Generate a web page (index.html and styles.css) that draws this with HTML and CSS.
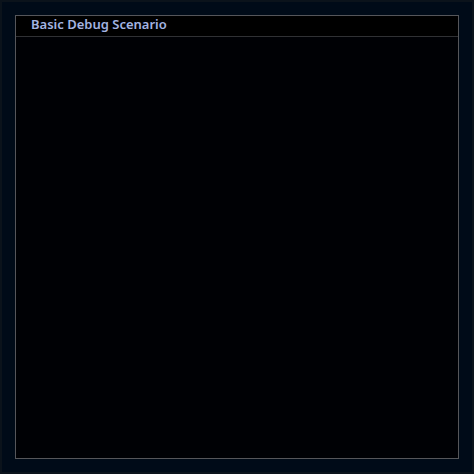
FILE: index.html
```html
<!DOCTYPE html>
<html lang="en">
<head>
  <meta charset="UTF-8">
  <meta name="viewport" content="width=device-width, initial-scale=1">
  <title>Basic Debug Scenario</title>
  <link rel="stylesheet" href="styles.css">
</head>
<body>

  <main class="panel">
    <header class="panel-header">
      <h1 class="panel-title">Basic Debug Scenario</h1>
    </header>
    <section class="panel-body"></section>
  </main>

</body>
</html>
```

FILE: styles.css
```css
* { box-sizing: border-box; }

body {
  display: flex;
  min-height: 100vh;
  margin: 0;
  padding: 13px;
  border: 2px solid #0b131b;
  background: #000b18;
  color: #a3b4e2;
  font-family: "Noto Sans", "Open Sans", sans-serif;
}

.panel {
  display: flex;
  flex: 1;
  flex-direction: column;
  border: 1px solid #55565a;
  background: #000105;
}

.panel-header {
  padding: 0 15px 4px;
  border-bottom: 1px solid #303134;
  background: #000;
}

.panel-title {
  margin: 0;
  font-size: 13px;
  font-weight: 600;
  line-height: 16px;
}

.panel-body { flex: 1; }
```
